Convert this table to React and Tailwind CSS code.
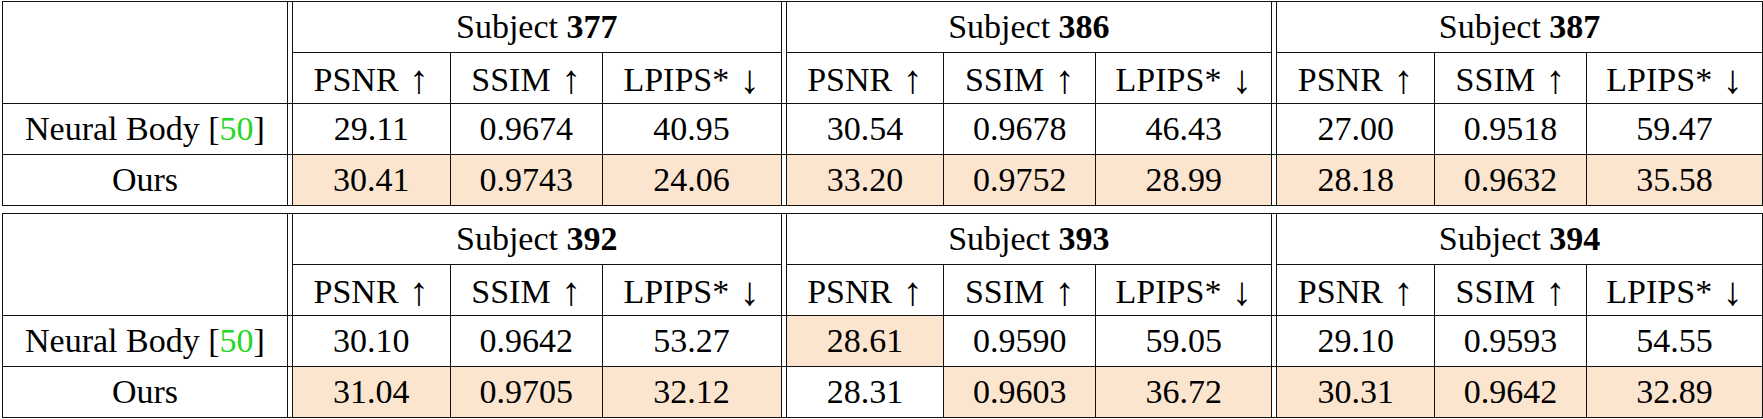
import React from 'react'

const metrics = [
  ['PSNR', '↑'],
  ['SSIM', '↑'],
  ['LPIPS*', '↓'],
]

const blocks = [
  [
    { id: '377', nb: ['29.11', '0.9674', '40.95'], ours: ['30.41', '0.9743', '24.06'], nbHi: [0, 0, 0], oursHi: [1, 1, 1] },
    { id: '386', nb: ['30.54', '0.9678', '46.43'], ours: ['33.20', '0.9752', '28.99'], nbHi: [0, 0, 0], oursHi: [1, 1, 1] },
    { id: '387', nb: ['27.00', '0.9518', '59.47'], ours: ['28.18', '0.9632', '35.58'], nbHi: [0, 0, 0], oursHi: [1, 1, 1] },
  ],
  [
    { id: '392', nb: ['30.10', '0.9642', '53.27'], ours: ['31.04', '0.9705', '32.12'], nbHi: [0, 0, 0], oursHi: [1, 1, 1] },
    { id: '393', nb: ['28.61', '0.9590', '59.05'], ours: ['28.31', '0.9603', '36.72'], nbHi: [1, 0, 0], oursHi: [0, 1, 1] },
    { id: '394', nb: ['29.10', '0.9593', '54.55'], ours: ['30.31', '0.9642', '32.89'], nbHi: [0, 0, 0], oursHi: [1, 1, 1] },
  ],
]

const cell = 'border border-[#111] text-center align-middle p-0 whitespace-nowrap'
const sep = 'border-x border-[#111] p-0'

function Sep({ rowSpan, edge }) {
  return <td rowSpan={rowSpan} className={`${sep} ${edge ? 'border-y' : ''}`} />
}

function DataRow({ label, groups, field, hiField }) {
  return (
    <tr className="h-[51px]">
      <td className={cell}>{label}</td>
      {groups.map((g) => (
        <React.Fragment key={g.id}>
          <Sep edge />
          {g[field].map((v, i) => (
            <td key={i} className={`${cell} ${g[hiField][i] ? 'bg-[#fce5cf]' : ''}`}>
              {v}
            </td>
          ))}
        </React.Fragment>
      ))}
    </tr>
  )
}

function Block({ groups }) {
  return (
    <table className="table-fixed border-collapse font-[family-name:'Liberation_Serif',serif] text-[34px] leading-none">
      <colgroup>
        <col className="w-[285px]" />
        {groups.map((g, i) => (
          <React.Fragment key={g.id}>
            <col className="w-[5px]" />
            <col className="w-[158px]" />
            <col className="w-[152px]" />
            <col className={i === 0 ? 'w-[179px]' : 'w-[176px]'} />
          </React.Fragment>
        ))}
      </colgroup>
      <tbody>
        <tr className="h-[51px]">
          <td rowSpan={2} className={cell} />
          {groups.map((g) => (
            <React.Fragment key={g.id}>
              <Sep rowSpan={2} edge />
              <td colSpan={3} className={cell}>
                Subject <b>{g.id}</b>
              </td>
            </React.Fragment>
          ))}
        </tr>
        <tr className="h-[51px]">
          {groups.map((g) =>
            metrics.map(([name, arrow]) => (
              <td key={g.id + name} className={cell}>
                {name}{' '}
                <span className="relative top-[2px] ml-[2px] text-[40px] font-light leading-none">{arrow}</span>
              </td>
            ))
          )}
        </tr>
        <DataRow
          label={
            <>
              Neural Body [<span className="text-[#22d822]">50</span>]
            </>
          }
          groups={groups}
          field="nb"
          hiField="nbHi"
        />
        <DataRow label="Ours" groups={groups} field="ours" hiField="oursHi" />
      </tbody>
    </table>
  )
}

export default function App() {
  return (
    <div className="w-[1763px] h-[419px] bg-white pt-[1px] pl-[2px] font-[family-name:'Liberation_Serif',serif] text-black flex flex-col gap-[7px]">
      {blocks.map((b, i) => (
        <Block key={i} groups={b} />
      ))}
    </div>
  )
}
